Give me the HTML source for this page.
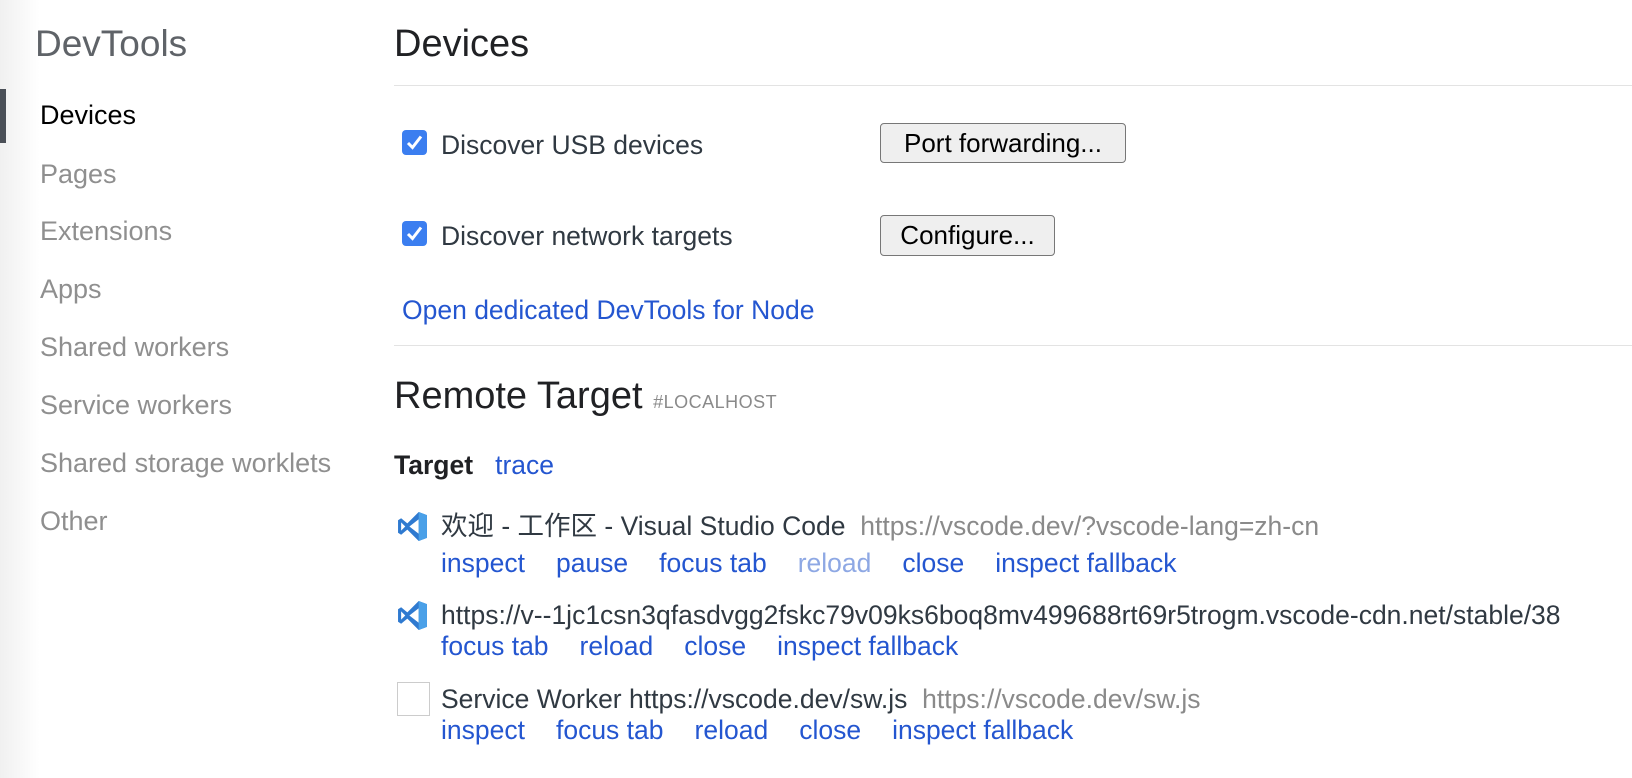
<!DOCTYPE html>
<html><head><meta charset="utf-8"><style>
body{margin:0;width:1632px;height:778px;background:#fff;font-family:"Liberation Sans","Noto Sans CJK SC",sans-serif;position:relative;overflow:hidden;color:#303942}
.a{position:absolute;white-space:nowrap;line-height:30px}
.shadow{position:absolute;left:0;top:0;width:40px;height:778px;background:linear-gradient(90deg,rgba(0,0,0,0.06),rgba(0,0,0,0))}
.side{color:#8f8f8f;font-size:27px}
.lk{color:#2456d0}
.lk span{margin-right:31px}
.btn{position:absolute;border:1px solid #777;border-radius:4px;background:#efefef;color:#000;font-size:26px;display:flex;align-items:center;justify-content:center;box-sizing:border-box}
.cb{position:absolute;width:25px;height:25px;background:#3b7ef0;border-radius:4px}
.hr{position:absolute;left:394px;right:0;height:1px;background:#e3e3e3}
.t{font-size:26.5px}
</style></head><body>
<div class="shadow"></div>
<div class="a" style="left:35px;top:24px;font-size:37px;line-height:40px;color:#5f6368">DevTools</div>
<div style="position:absolute;left:0;top:89px;width:6px;height:54px;background:#4a4f57"></div>
<div class="a side" style="left:40px;top:100px;color:#000">Devices</div>
<div class="a side" style="left:40px;top:159px">Pages</div>
<div class="a side" style="left:40px;top:216px">Extensions</div>
<div class="a side" style="left:40px;top:274px">Apps</div>
<div class="a side" style="left:40px;top:332px">Shared workers</div>
<div class="a side" style="left:40px;top:390px">Service workers</div>
<div class="a side" style="left:40px;top:448px">Shared storage worklets</div>
<div class="a side" style="left:40px;top:506px">Other</div>

<div class="a" style="left:394px;top:24px;font-size:38px;line-height:40px;color:#202124">Devices</div>
<div class="hr" style="top:85px"></div>
<div class="cb" style="left:402px;top:130px"><svg width="25" height="25"><path d="M6 13l4.5 4.5 8.5-11" stroke="#fff" stroke-width="3" fill="none"/></svg></div>
<div class="a t" style="left:441px;top:130px">Discover USB devices</div>
<div class="btn" style="left:880px;top:123px;width:246px;height:40px">Port forwarding...</div>
<div class="cb" style="left:402px;top:221px"><svg width="25" height="25"><path d="M6 13l4.5 4.5 8.5-11" stroke="#fff" stroke-width="3" fill="none"/></svg></div>
<div class="a t" style="left:441px;top:221px">Discover network targets</div>
<div class="btn" style="left:880px;top:215px;width:175px;height:41px">Configure...</div>
<div class="a t lk" style="left:402px;top:295px">Open dedicated DevTools for Node</div>
<div class="hr" style="top:345px"></div>
<div class="a" style="left:394px;top:376px;font-size:38px;line-height:40px;color:#202124">Remote Target <span style="font-size:18px;color:#8a8a8a;letter-spacing:0.5px">#LOCALHOST</span></div>
<div class="a t" style="left:394px;top:450px"><b style="color:#202124">Target</b>&nbsp;&nbsp; <span class="lk">trace</span></div>

<svg class="a" style="left:397px;top:511px" width="31" height="31" viewBox="0 0 30 30"><path d="M21 1L10 12 4 7 1 9v12l3 2 6-5 11 11 8-3V4z" fill="#2f7ad0"/><path d="M21 8v14l-9-7z" fill="#fff"/><path d="M21 1l8 3v22l-8 3z" fill="#4aa0e8"/><path d="M4 11l4 4-4 4z" fill="#fff"/></svg>
<div class="a t" style="left:441px;top:511px">欢迎 - 工作区 - Visual Studio Code &nbsp;<span style="color:#8a8a8a">https://vscode.dev/?vscode-lang=zh-cn</span></div>
<div class="a t lk" style="left:441px;top:548px"><span>inspect</span><span>pause</span><span>focus tab</span><span style="color:#8ea8e4">reload</span><span>close</span><span>inspect fallback</span></div>

<svg class="a" style="left:397px;top:600px" width="31" height="31" viewBox="0 0 30 30"><path d="M21 1L10 12 4 7 1 9v12l3 2 6-5 11 11 8-3V4z" fill="#2f7ad0"/><path d="M21 8v14l-9-7z" fill="#fff"/><path d="M21 1l8 3v22l-8 3z" fill="#4aa0e8"/><path d="M4 11l4 4-4 4z" fill="#fff"/></svg>
<div class="a t" style="left:441px;top:600px">https://v--1jc1csn3qfasdvgg2fskc79v09ks6boq8mv499688rt69r5trogm.vscode-cdn.net/stable/38</div>
<div class="a t lk" style="left:441px;top:631px"><span>focus tab</span><span>reload</span><span>close</span><span>inspect fallback</span></div>

<div style="position:absolute;left:397px;top:682px;width:33px;height:34px;border:1px solid #ccc;box-sizing:border-box"></div>
<div class="a t" style="left:441px;top:684px">Service Worker https://vscode.dev/sw.js &nbsp;<span style="color:#8a8a8a">https://vscode.dev/sw.js</span></div>
<div class="a t lk" style="left:441px;top:715px"><span>inspect</span><span>focus tab</span><span>reload</span><span>close</span><span>inspect fallback</span></div>
</body></html>
